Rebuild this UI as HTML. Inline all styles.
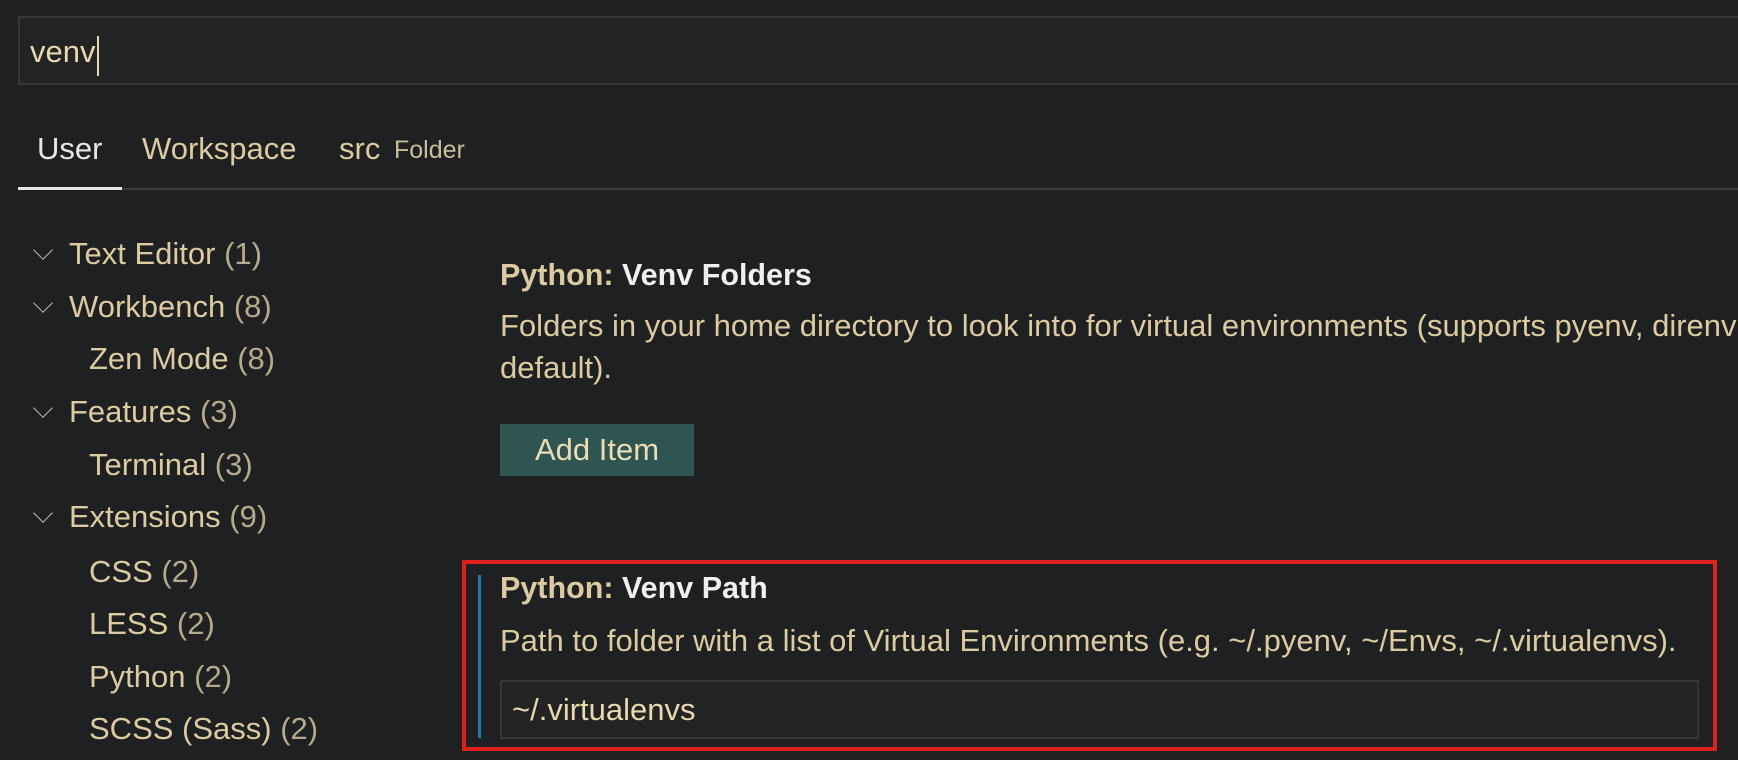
<!DOCTYPE html>
<html><head><meta charset="utf-8"><style>
html,body{margin:0;padding:0;background:#1e2022;width:1738px;height:760px;overflow:hidden;font-family:"Liberation Sans",sans-serif;color:#dccba0}
#wrap{position:relative;width:1738px;height:760px;overflow:hidden}
.abs{position:absolute;white-space:nowrap}
.search{position:absolute;left:18px;top:16px;width:1722px;height:69px;border:2px solid #3a3633;border-right:none;background:#222423;box-sizing:border-box}
.tabline{position:absolute;left:18px;top:188px;width:1720px;height:2px;background:#3c3c3c}
.tree{font-size:31px;line-height:34px}
.cnt{color:#b5aa8c}
.chev{position:absolute;width:13px;height:13px;border-right:1.4px solid #c8bfa8;border-bottom:1.4px solid #c8bfa8;transform:rotate(45deg)}
.t{font-size:31px}
</style></head><body><div id="wrap">
<div class="search"></div>
<div class="abs" style="left:30px;top:34px;font-size:31px;color:#e8d8b0">venv</div>
<div class="abs" style="left:97px;top:36px;width:2px;height:40px;background:#e8d8b0"></div>
<div class="abs" style="left:37px;top:131px;font-size:31px;color:#e6e6e6">User</div>
<div class="abs" style="left:142px;top:131px;font-size:31px;color:#dccba0">Workspace</div>
<div class="abs" style="left:339px;top:131px;font-size:31px;color:#dccba0">src</div>
<div class="abs" style="left:394px;top:136px;font-size:25px;color:#c9bc98">Folder</div>
<div class="tabline"></div>
<div class="abs" style="left:18px;top:187px;width:104px;height:3px;background:#e6e6e6"></div>

<div class="tree">
<div class="chev" style="left:36px;top:243px"></div><div class="abs" style="left:69px;top:237px">Text Editor <span class="cnt">(1)</span></div>
<div class="chev" style="left:36px;top:296px"></div><div class="abs" style="left:69px;top:290px">Workbench <span class="cnt">(8)</span></div>
<div class="abs" style="left:89px;top:342px">Zen Mode <span class="cnt">(8)</span></div>
<div class="chev" style="left:36px;top:401px"></div><div class="abs" style="left:69px;top:395px">Features <span class="cnt">(3)</span></div>
<div class="abs" style="left:89px;top:448px">Terminal <span class="cnt">(3)</span></div>
<div class="chev" style="left:36px;top:506px"></div><div class="abs" style="left:69px;top:500px">Extensions <span class="cnt">(9)</span></div>
<div class="abs" style="left:89px;top:555px">CSS <span class="cnt">(2)</span></div>
<div class="abs" style="left:89px;top:607px">LESS <span class="cnt">(2)</span></div>
<div class="abs" style="left:89px;top:660px">Python <span class="cnt">(2)</span></div>
<div class="abs" style="left:89px;top:712px">SCSS (Sass) <span class="cnt">(2)</span></div>
</div>

<div class="abs" style="left:500px;top:258px;font-size:30.5px;font-weight:bold">Python: <span style="color:#f0f0f0">Venv Folders</span></div>
<div class="abs t" style="left:500px;top:308px;width:1238px;overflow:hidden">Folders in your home directory to look into for virtual environments (supports pyenv, direnv and pipenv by</div>
<div class="abs t" style="left:500px;top:350px">default).</div>
<div class="abs" style="left:500px;top:424px;width:194px;height:52px;background:#2f5553;font-size:31px;line-height:52px;text-align:center;color:#ecdcb4">Add Item</div>

<div class="abs" style="left:462px;top:560px;width:1255px;height:191px;border:4px solid #e0201c;box-sizing:border-box"></div>
<div class="abs" style="left:478px;top:575px;width:3px;height:163px;background:#1a7fa8"></div>
<div class="abs" style="left:500px;top:571px;font-size:30.5px;font-weight:bold">Python: <span style="color:#f0f0f0">Venv Path</span></div>
<div class="abs t" style="left:500px;top:623px">Path to folder with a list of Virtual Environments (e.g. ~/.pyenv, ~/Envs, ~/.virtualenvs).</div>
<div class="abs" style="left:500px;top:680px;width:1199px;height:59px;border:2px solid #3a3633;background:#222423;box-sizing:border-box"></div>
<div class="abs" style="left:512px;top:692px;font-size:31px;color:#e8d8b0">~/.virtualenvs</div>
</div></body></html>
